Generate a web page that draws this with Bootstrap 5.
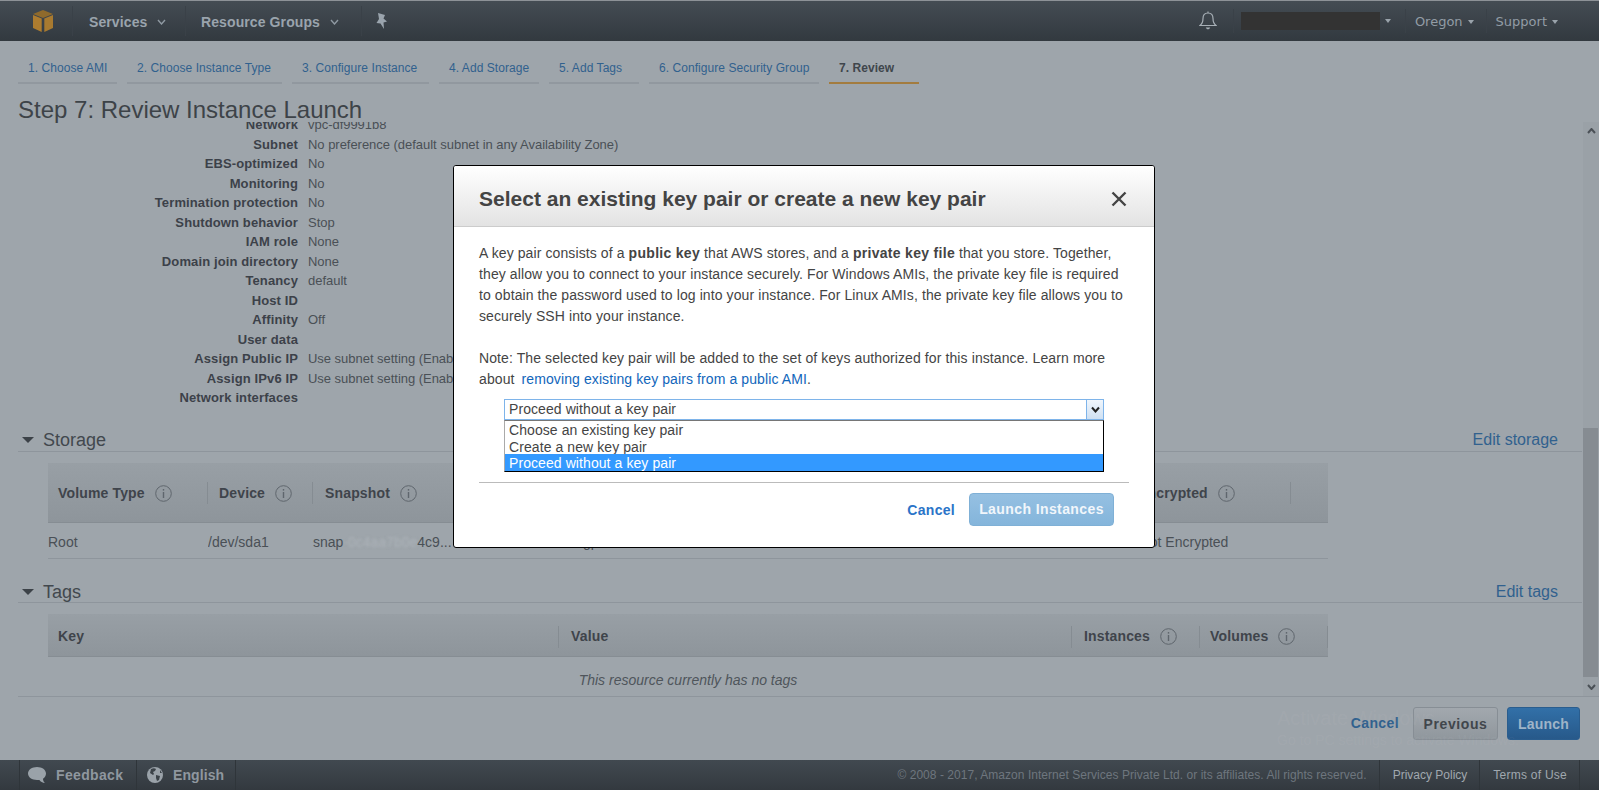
<!DOCTYPE html>
<html lang="en">
<head>
<meta charset="utf-8">
<title>Step 7: Review Instance Launch</title>
<link href="https://cdn.jsdelivr.net/npm/bootstrap@5.3.0/dist/css/bootstrap.min.css" rel="stylesheet">
<style>
html,body{height:790px;overflow:hidden}
body{background:#9ea5ab;font-family:"Liberation Sans",Arial,sans-serif;font-size:13px;color:#4a5056;position:relative}
.app-shell{height:790px}
.topbar{height:41px;flex:none;background:linear-gradient(#444c53,#32393f);border-top:1px solid #8d9297;color:#99a3ac}
.logo-cell{width:73px;height:30px;border-right:1px solid #3a4148;padding-left:32px}
.menu-cell{height:30px;border-right:1px solid #3a4148;font-size:14px;font-weight:700;letter-spacing:.1px;gap:10px;padding:2px 12px 0 16px;color:#9aa4ad}
.menu-cell.first{width:113px}
.menu-cell.second{width:176px;padding-left:15px}
.chev{width:9px;height:6px}
.pin-cell{padding-left:13px}
.right-cell{height:24px;border-right:1px solid #3a4148;font-family:"DejaVu Sans",sans-serif;font-size:13px;gap:5px;padding:2px 12px 0 9px;color:#929ca5}
.right-cell.caret-only{padding:0 14px 0 5px}
.right-cell.last{border:0;padding-right:41px}
.bell-cell{width:52px;height:24px;border-right:1px solid #3a4148;padding-left:17px}
.redacted{width:139px;height:18px;background:#333;margin-left:7px}
.caret-d{width:0;height:0;border-left:3.5px solid transparent;border-right:3.5px solid transparent;border-top:4px solid #9aa3ab}
.tabs-row{height:43px;flex:none;padding:16px 0 0 18px;gap:10px}
.wiz-tab{height:27px;border-bottom:2px solid #91989f;padding:1px 0 0 10px;font-size:12px;letter-spacing:.06px;line-height:21px;color:#31618e;white-space:nowrap}
.wiz-tab.current{border-bottom-color:#a37c3f;color:#40464c;font-weight:700;padding-left:10px}
.wt-1{width:99px}.wt-2{width:155px}.wt-3{width:137px}.wt-4{width:100px}.wt-5{width:90px}.wt-6{width:170px}.wt-7{width:90px}
.page-title{height:38px;flex:none;margin:0;padding:12px 0 0 18px;font-size:24px;line-height:28px;font-weight:400;color:#3d4348;white-space:nowrap;position:relative;z-index:1}
.scroll-wrap{height:575px;flex:none;margin-left:18px;border-bottom:1px solid #8e959c;overflow:hidden}
.scroll-body{flex:1 1 auto;min-width:0;overflow:hidden}
.detail-list{margin-top:-7px}
.detail-line{height:19.5px;line-height:19.5px;white-space:nowrap;color:#4a5056;letter-spacing:-.03px}
.detail-key{width:290px;text-align:right;font-weight:700;color:#3c4149;padding-right:10px;flex:none;letter-spacing:.12px}
.sect-head{height:23px;margin-right:1px;border-bottom:1px solid #8e959c;padding:1px 0 0 4px}
.sect-first{margin-top:21px}
.sect-next{margin-top:21px}
.sect-head h2{font-size:18px;font-weight:400;color:#42484e;margin:0;line-height:22px}
.tri{width:0;height:0;border-left:6px solid transparent;border-right:6px solid transparent;border-top:6px solid #3c4248;margin-right:9px}
.sect-link{font-size:16px;color:#31618e;margin-right:24px;text-decoration:none;line-height:22px}
.data-tbl{width:1280px;margin-left:30px;margin-top:11px;table-layout:fixed;border-collapse:collapse}
.data-tbl th{background:linear-gradient(#989fa5,#8e959b);font-size:14px;font-weight:700;letter-spacing:.15px;color:#3f444b;padding:2px 0 0;white-space:nowrap;border-bottom:1px solid #868d93}
.th-short th{padding-top:4px}
.cell-in{display:flex;align-items:center;gap:10px;height:22px;padding-left:10px;border-right:1px solid #858c92}
.cell-in.mid{padding-left:11px}
.cell-in.tight{padding-left:12px}
.cell-in.none{border-right:0}
.info-i{width:17px;height:17px;flex:none}
.data-tbl td{height:36px;padding:3px 0 0;white-space:nowrap;overflow:hidden;font-size:14px;color:#4a5056;border-bottom:1px solid #8e959c}
.smudge{color:transparent;text-shadow:0 0 3px rgba(190,196,201,.5)}
.th-tall{height:60px}
.th-short{height:42px}
.empty-note{font-style:italic;font-size:14px;text-align:center;color:#4f555b;width:1280px;margin-left:30px;padding-top:14px;line-height:18px}
.scroll-rail{width:16px;flex:none;background:#9aa1a7;height:574px}
.rail-btn{height:19px;color:#4b5157}
.rail-thumb{height:250px;background:#868c92;margin-top:287px;width:15px}
.action-bar{height:63px;flex:none;padding:10px 19px 0 0;gap:14px;position:relative}
.act-cancel{font-size:14px;font-weight:700;letter-spacing:.4px;color:#31618e;text-decoration:none;line-height:33px}
.act-btn{height:33px;border-radius:3px;font-size:14px;font-weight:700;padding:0;line-height:32px;text-align:center}
.act-prev{width:85px;background:linear-gradient(#a2a8ae,#90979d);border:1px solid #878e95;color:#41464c;letter-spacing:.6px}
.act-go{width:73px;background:linear-gradient(#3270a8,#27598a);border:1px solid #2a5d8e;color:#9fb4c8;margin-left:-5px;letter-spacing:.2px}
.watermark{position:absolute;left:1277px;top:9px;color:rgba(255,255,255,.05);white-space:nowrap;pointer-events:none}
.watermark b{display:block;font-weight:400;font-size:20px;line-height:24px}
.watermark span{display:block;font-size:14px;line-height:20px}
.foot-bar{height:30px;flex:none;background:linear-gradient(#414950,#33393f);font-size:12px;color:#6e767e;padding-left:19px}
.foot-item{height:30px;border-left:1px solid #2f353a;font-size:14px;font-weight:700;letter-spacing:.35px;color:#8f979f;gap:10px}
.foot-a{width:117px;padding-left:8px}
.foot-b{width:99px;padding-left:10px;letter-spacing:.1px}
.foot-c{width:1px}
.foot-note{padding-right:12px;letter-spacing:.04px}
.foot-link{height:30px;border-left:1px solid #2f353a;padding:0 12px 0 13px;color:#a0a8af;line-height:30px;white-space:nowrap}
.foot-link.end{border-right:1px solid #2f353a;margin-right:19px;letter-spacing:.25px}
.dialog-box{position:absolute;left:453px;top:165px;width:702px;height:383px;background:#fff;border:1px solid #000;border-radius:3px;color:#444;z-index:5;font-size:14px;overflow:hidden}
.dialog-top{height:61px;padding:5px 25px 0;background:linear-gradient(#fff,#e3e3e3);border-bottom:1px solid #ccc}
.dialog-top h3{font-size:21px;font-weight:700;color:#444;margin:0}
.dialog-top svg{margin-right:2px}
.dialog-copy{padding:16px 25px 0;line-height:21px;letter-spacing:.1px;white-space:nowrap}
.dialog-copy b{letter-spacing:.3px}
.dialog-copy p{margin:0 0 21px;color:#444}
.dialog-copy a{color:#1166bb;text-decoration:none;margin-left:3px}
.pick-box{margin:-12px 25px 0 50px;width:600px;line-height:17px;letter-spacing:.08px}
.pick-head{height:21px;border:1px solid #7eb4ea;padding-left:4px;line-height:21px}
.pick-arrow{width:17px;height:19px;background:linear-gradient(#f0f6fc,#cfe0f2);border-left:1px solid #7eb4ea;margin-right:0}
.pick-list{border:1px solid #000;border-top-color:#767676;border-left-color:#aaa;border-radius:0}
.pick-opt{background:#fff;border:0;padding:0 0 0 4px;height:17px;line-height:18px;color:#444}
.pick-opt.active{background:#3399ff;color:#fff}
.dialog-rule{margin:10px 25px 0;border:0;border-top:1px solid #bbb;opacity:1}
.dialog-actions{padding:10px 40px 0 0;gap:14px}
.dlg-cancel{font-size:14px;font-weight:700;letter-spacing:.3px;color:#2a74c8;text-decoration:none;padding-top:1px}
.dlg-go{width:145px;height:33px;border-radius:4px;background:linear-gradient(#95c0e2,#84b5db);border:1px solid #7fb0d6;color:#f1f6fb;font-weight:700;font-size:14px;letter-spacing:.4px;line-height:31px;text-align:center}
</style>
</head>
<body>
<div class="app-shell d-flex flex-column">
  <header class="topbar d-flex align-items-center">
    <div class="logo-cell d-flex align-items-center">
      <svg width="22" height="22" viewBox="0 0 22 22"><polygon points="11,0 21,4 11,8 1,4" fill="#8f6a2c"/><polygon points="1,5 9.7,8.600 9.7,22 1,18" fill="#ad7c2f"/><polygon points="21,5 12.3,8.600 12.3,22 21,18" fill="#a87a30"/></svg>
    </div>
    <div class="menu-cell first d-flex align-items-center">Services <svg class="chev" viewBox="0 0 9 6"><path d="M1 1l3.500 4L8 1" fill="none" stroke="#8f99a2" stroke-width="1.400"/></svg></div>
    <div class="menu-cell second d-flex align-items-center">Resource Groups <svg class="chev" viewBox="0 0 9 6"><path d="M1 1l3.500 4L8 1" fill="none" stroke="#8f99a2" stroke-width="1.400"/></svg></div>
    <div class="pin-cell d-flex align-items-center"><svg width="14" height="18" viewBox="0 0 14 18"><path d="M3 1l7 2-1.500 3.500L12 9.500 8.500 10.500 9 17 5.500 11.500 1.500 11 4 7z" fill="#9aa4ad"/></svg></div>
    <div class="ms-auto d-flex align-items-center">
      <div class="bell-cell d-flex align-items-center"><svg width="18" height="20" viewBox="0 0 18 20"><path d="M9 2c-3.400 0-5 2.600-5 5.500 0 3.500-1 5.500-3 7h16c-2-1.500-3-3.500-3-7C14 4.600 12.400 2 9 2zM9 .6v1.400" fill="none" stroke="#a7afb6" stroke-width="1.200"/><path d="M6.800 16.500h4.400c-.4 1.200-1.200 1.800-2.200 1.800s-1.800-.6-2.200-1.800z" fill="#a7afb6"/></svg></div>
      <div class="redacted"></div>
      <div class="right-cell caret-only d-flex align-items-center"><span class="caret-d"></span></div>
      <div class="right-cell d-flex align-items-center">Oregon <span class="caret-d"></span></div>
      <div class="right-cell last d-flex align-items-center">Support <span class="caret-d"></span></div>
    </div>
  </header>

  <nav class="tabs-row d-flex">
    <div class="wiz-tab wt-1">1. Choose AMI</div>
    <div class="wiz-tab wt-2">2. Choose Instance Type</div>
    <div class="wiz-tab wt-3">3. Configure Instance</div>
    <div class="wiz-tab wt-4">4. Add Storage</div>
    <div class="wiz-tab wt-5">5. Add Tags</div>
    <div class="wiz-tab wt-6">6. Configure Security Group</div>
    <div class="wiz-tab wt-7 current">7. Review</div>
  </nav>

  <h1 class="page-title">Step 7: Review Instance Launch</h1>

  <div class="scroll-wrap d-flex">
    <div class="scroll-body">
      <div class="detail-list">
        <div class="detail-line d-flex"><div class="detail-key">Network</div><div>vpc-df9991b8</div></div>
        <div class="detail-line d-flex"><div class="detail-key">Subnet</div><div>No preference (default subnet in any Availability Zone)</div></div>
        <div class="detail-line d-flex"><div class="detail-key">EBS-optimized</div><div>No</div></div>
        <div class="detail-line d-flex"><div class="detail-key">Monitoring</div><div>No</div></div>
        <div class="detail-line d-flex"><div class="detail-key">Termination protection</div><div>No</div></div>
        <div class="detail-line d-flex"><div class="detail-key">Shutdown behavior</div><div>Stop</div></div>
        <div class="detail-line d-flex"><div class="detail-key">IAM role</div><div>None</div></div>
        <div class="detail-line d-flex"><div class="detail-key">Domain join directory</div><div>None</div></div>
        <div class="detail-line d-flex"><div class="detail-key">Tenancy</div><div>default</div></div>
        <div class="detail-line d-flex"><div class="detail-key">Host ID</div><div></div></div>
        <div class="detail-line d-flex"><div class="detail-key">Affinity</div><div>Off</div></div>
        <div class="detail-line d-flex"><div class="detail-key">User data</div><div></div></div>
        <div class="detail-line d-flex"><div class="detail-key">Assign Public IP</div><div>Use subnet setting (Enable)</div></div>
        <div class="detail-line d-flex"><div class="detail-key">Assign IPv6 IP</div><div>Use subnet setting (Enable)</div></div>
        <div class="detail-line d-flex"><div class="detail-key">Network interfaces</div><div></div></div>
      </div>

      <div class="sect-head sect-first d-flex align-items-center">
        <span class="tri"></span><h2>Storage</h2><a class="sect-link ms-auto" href="#">Edit storage</a>
      </div>
      <table class="data-tbl">
        <colgroup><col style="width:160px"><col style="width:105px"><col style="width:167px"><col style="width:103px"><col style="width:125px"><col style="width:125px"><col style="width:145px"><col style="width:150px"><col style="width:163px"><col style="width:37px"></colgroup>
        <tr class="th-tall">
          <th><div class="cell-in">Volume Type <svg class="info-i" viewBox="0 0 17 17"><circle cx="8.500" cy="8.500" r="7.800" fill="none" stroke="#5f666d"/><rect x="7.800" y="7" width="1.400" height="6" fill="#5f666d"/><rect x="7.800" y="4" width="1.400" height="1.600" fill="#5f666d"/></svg></div></th>
          <th><div class="cell-in mid">Device <svg class="info-i" viewBox="0 0 17 17"><circle cx="8.500" cy="8.500" r="7.800" fill="none" stroke="#5f666d"/><rect x="7.800" y="7" width="1.400" height="6" fill="#5f666d"/><rect x="7.800" y="4" width="1.400" height="1.600" fill="#5f666d"/></svg></div></th>
          <th><div class="cell-in tight">Snapshot <svg class="info-i" viewBox="0 0 17 17"><circle cx="8.500" cy="8.500" r="7.800" fill="none" stroke="#5f666d"/><rect x="7.800" y="7" width="1.400" height="6" fill="#5f666d"/><rect x="7.800" y="4" width="1.400" height="1.600" fill="#5f666d"/></svg></div></th>
          <th><div class="cell-in">Size (GiB)</div></th>
          <th><div class="cell-in">Volume Type</div></th>
          <th><div class="cell-in">IOPS</div></th>
          <th><div class="cell-in">Throughput</div></th>
          <th><div class="cell-in">Delete</div></th>
          <th><div class="cell-in">Encrypted <svg class="info-i" viewBox="0 0 17 17"><circle cx="8.500" cy="8.500" r="7.800" fill="none" stroke="#5f666d"/><rect x="7.800" y="7" width="1.400" height="6" fill="#5f666d"/><rect x="7.800" y="4" width="1.400" height="1.600" fill="#5f666d"/></svg></div></th>
          <th><div class="cell-in none"></div></th>
        </tr>
        <tr>
          <td>Root</td><td>/dev/sda1</td><td>snap<span class="smudge">-0c4aa7b0e</span>4c9...</td><td>8</td><td>gp2</td><td>100 / 3000</td><td>N/A</td><td>Yes</td><td>&nbsp;&nbsp;&nbsp;Not Encrypted</td><td></td>
        </tr>
      </table>

      <div class="sect-head sect-next d-flex align-items-center">
        <span class="tri"></span><h2>Tags</h2><a class="sect-link ms-auto" href="#">Edit tags</a>
      </div>
      <table class="data-tbl">
        <colgroup><col style="width:511px"><col style="width:513px"><col style="width:128px"><col style="width:128px"></colgroup>
        <tr class="th-short">
          <th><div class="cell-in">Key</div></th>
          <th><div class="cell-in tight">Value</div></th>
          <th><div class="cell-in tight">Instances <svg class="info-i" viewBox="0 0 17 17"><circle cx="8.500" cy="8.500" r="7.800" fill="none" stroke="#5f666d"/><rect x="7.800" y="7" width="1.400" height="6" fill="#5f666d"/><rect x="7.800" y="4" width="1.400" height="1.600" fill="#5f666d"/></svg></div></th>
          <th><div class="cell-in">Volumes <svg class="info-i" viewBox="0 0 17 17"><circle cx="8.500" cy="8.500" r="7.800" fill="none" stroke="#5f666d"/><rect x="7.800" y="7" width="1.400" height="6" fill="#5f666d"/><rect x="7.800" y="4" width="1.400" height="1.600" fill="#5f666d"/></svg></div></th>
        </tr>
      </table>
      <div class="empty-note">This resource currently has no tags</div>
    </div>
    <div class="scroll-rail d-flex flex-column">
      <div class="rail-btn d-flex align-items-center justify-content-center"><svg width="9" height="6" viewBox="0 0 9 6"><path d="M1 5l3.500-4L8 5" fill="none" stroke="#4b5157" stroke-width="2"/></svg></div>
      <div class="rail-thumb"></div>
      <div class="rail-btn d-flex align-items-center justify-content-center"><svg width="9" height="6" viewBox="0 0 9 6"><path d="M1 1l3.500 4L8 1" fill="none" stroke="#4b5157" stroke-width="2"/></svg></div>
    </div>
  </div>

  <div class="action-bar d-flex justify-content-end align-items-start">
    <a class="act-cancel" href="#">Cancel</a>
    <div class="act-btn act-prev">Previous</div>
    <div class="act-btn act-go">Launch</div>
    <div class="watermark"><b>Activate Windows</b><span>Go to PC settings to activate Windows.</span></div>
  </div>

  <footer class="foot-bar d-flex align-items-center">
    <div class="foot-item foot-a d-flex align-items-center">
      <svg width="18" height="17" viewBox="0 0 18 17"><path d="M9 0c5 0 9 2.800 9 6.500 0 2.200-1.200 4-3 5.200 0 1.800.8 3.300 2 4.300-2.500-.2-4.400-1.300-5.600-3C10.600 13 9.800 13 9 13c-5 0-9-2.800-9-6.500S4 0 9 0z" fill="#9aa2a9"/></svg>Feedback
    </div>
    <div class="foot-item foot-b d-flex align-items-center">
      <svg width="16" height="16" viewBox="0 0 16 16"><circle cx="8" cy="8" r="8" fill="#9aa2a9"/><path d="M4 2c2-1 4-1 5 0l-1 2-2 1 1 2-1 1-3-2zM9 8l4 1-1 4-2 1-1-3zM13 3l2 3-2 0z" fill="#3b4248"/></svg>English
    </div>
    <div class="foot-item foot-c"></div>
    <div class="foot-note ms-auto">© 2008 - 2017, Amazon Internet Services Private Ltd. or its affiliates. All rights reserved.</div>
    <div class="foot-link">Privacy Policy</div>
    <div class="foot-link end">Terms of Use</div>
  </footer>
</div>

<div class="dialog-box" role="dialog">
  <div class="dialog-top d-flex align-items-center justify-content-between">
    <h3>Select an existing key pair or create a new key pair</h3>
    <svg width="16" height="16" viewBox="0 0 16 16"><path d="M1.500 1.500l13 13M14.500 1.500l-13 13" stroke="#444" stroke-width="2.400" fill="none"/></svg>
  </div>
  <div class="dialog-copy">
    <p>A key pair consists of a <b>public key</b> that AWS stores, and a <b>private key file</b> that you store. Together,<br>they allow you to connect to your instance securely. For Windows AMIs, the private key file is required<br>to obtain the password used to log into your instance. For Linux AMIs, the private key file allows you to<br>securely SSH into your instance.</p>
    <p>Note: The selected key pair will be added to the set of keys authorized for this instance. Learn more<br>about <a href="#">removing existing key pairs from a public AMI</a>.</p>
  </div>
  <div class="pick-box">
    <div class="pick-head d-flex align-items-center justify-content-between">Proceed without a key pair
      <span class="pick-arrow d-flex align-items-center justify-content-center"><svg width="9" height="7" viewBox="0 0 9 7"><path d="M1 1.500l3.500 4L8 1.500" fill="none" stroke="#222" stroke-width="2"/></svg></span>
    </div>
    <div class="list-group pick-list">
      <div class="list-group-item pick-opt">Choose an existing key pair</div>
      <div class="list-group-item pick-opt">Create a new key pair</div>
      <div class="list-group-item pick-opt active">Proceed without a key pair</div>
    </div>
  </div>
  <hr class="dialog-rule">
  <div class="dialog-actions d-flex justify-content-end align-items-center">
    <a class="dlg-cancel" href="#">Cancel</a>
    <div class="dlg-go">Launch Instances</div>
  </div>
</div>
<script src="https://cdn.jsdelivr.net/npm/bootstrap@5.3.0/dist/js/bootstrap.bundle.min.js"></script>
</body>
</html>
